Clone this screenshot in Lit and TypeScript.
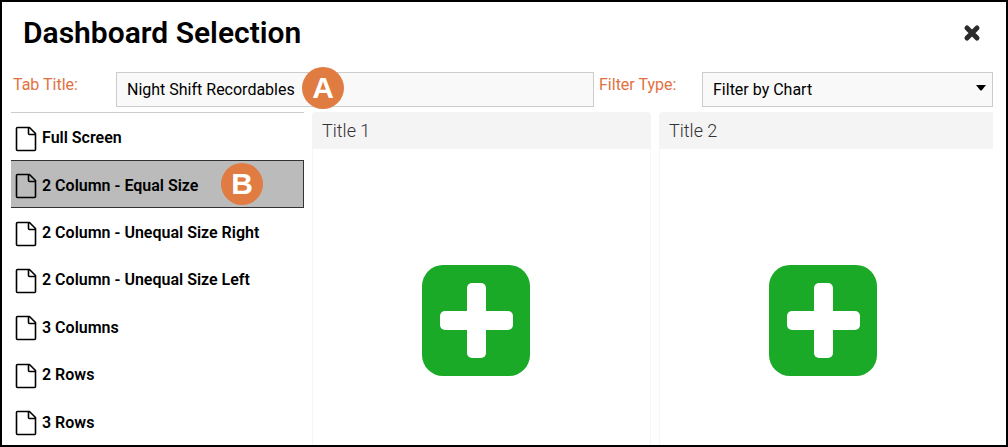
import { LitElement, html, css } from "lit";
import { customElement, property, state } from "lit/decorators.js";
import { classMap } from "lit/directives/class-map.js";

const LAYOUTS = [
  "Full Screen",
  "2 Column - Equal Size",
  "2 Column - Unequal Size Right",
  "2 Column - Unequal Size Left",
  "3 Columns",
  "2 Rows",
  "3 Rows",
];

@customElement("step-badge")
class StepBadge extends LitElement {
  @property() letter = "";

  static styles = css`
    :host {
      display: flex;
      align-items: center;
      justify-content: center;
      width: 42px;
      height: 42px;
      border-radius: 50%;
      background: #e07b41;
      color: #fff;
      font: bold 30px/42px "Liberation Sans", Arial, sans-serif;
      pointer-events: none;
    }
  `;

  render() {
    return html`${this.letter}`;
  }
}

@customElement("chart-panel")
class ChartPanel extends LitElement {
  @property() heading = "";

  static styles = css`
    :host {
      display: flex;
      flex-direction: column;
      min-width: 0;
      border-radius: 4px 4px 0 0;
    }
    .heading {
      margin: 0;
      padding: 0 10px;
      background: #f4f4f4;
      border-radius: 4px 4px 0 0;
      color: #333;
      font-size: 18px;
      font-weight: 300;
      line-height: 37px;
    }
    .body {
      flex: 1;
      display: flex;
      justify-content: center;
      align-items: flex-start;
      padding: 116px 11px 0 0;
      border: solid #f6f6f6;
      border-width: 0 1px;
    }
    :host([flush]) .heading {
      border-top-right-radius: 0;
    }
    :host([flush]) .body {
      border-right: 0;
      padding-right: 7px;
    }
    .add {
      padding: 0;
      border: 0;
      background: none;
      cursor: pointer;
    }
    .plus {
      display: block;
      width: 108px;
      height: 111px;
    }
  `;

  render() {
    return html`
      <h2 class="heading">${this.heading}</h2>
      <div class="body">
        <button class="add" type="button" aria-label="Add chart to ${this.heading}">
          <svg class="plus" viewBox="0 0 108 111" aria-hidden="true">
            <rect width="108" height="111" rx="21" fill="#1aaa28" />
            <rect x="45" y="18" width="19" height="75" rx="5" fill="#fff" />
            <rect x="18" y="46" width="73" height="19" rx="5" fill="#fff" />
          </svg>
        </button>
      </div>
    `;
  }
}

@customElement("app-root")
class AppRoot extends LitElement {
  @state() private selected = 1;

  static styles = css`
    :host {
      display: block;
      color: #000;
      font-family: Roboto, "Liberation Sans", sans-serif;
      font-size: 16px;
    }
    *,
    *::before {
      box-sizing: border-box;
    }
    .dialog {
      display: flex;
      flex-direction: column;
      min-height: 100vh;
      padding: 0 13px 0 9px;
      border: 2px solid #000;
      background: #fff;
    }
    .header {
      display: flex;
      align-items: center;
      justify-content: space-between;
      height: 62px;
      padding: 0 12px;
    }
    .title {
      margin: 0;
      font-size: 30px;
      font-weight: 600;
      line-height: 36px;
    }
    .close {
      padding: 0;
      border: 0;
      background: none;
      cursor: pointer;
    }
    .cross {
      display: block;
      width: 18px;
      height: 18px;
    }
    .filters {
      display: flex;
      padding: 8px 0 5px 2px;
    }
    .label {
      color: #e2703f;
      line-height: 25px;
    }
    .label-tab {
      width: 103px;
    }
    .label-filter {
      width: 103px;
      margin-left: 5px;
    }
    .field {
      position: relative;
      flex: 478;
    }
    .field-filter {
      flex: 291;
    }
    .control {
      display: block;
      width: 100%;
      height: 35px;
      margin: 0;
      padding: 0 10px;
      border: 1px solid #ccc;
      border-radius: 0;
      background: #f9f9f9;
      color: #000;
      font: inherit;
      appearance: none;
    }
    .arrow {
      position: absolute;
      top: 13px;
      right: 7px;
      width: 10px;
      height: 6px;
      pointer-events: none;
    }
    .badge-a {
      position: absolute;
      top: -5px;
      left: 186px;
    }
    .content {
      flex: 1;
      display: grid;
      grid-template-columns: 293fr 339fr 334fr;
      gap: 8px;
    }
    .layouts {
      display: grid;
      grid-auto-rows: 1fr;
      margin: 0;
      padding: 0;
      border-top: 1px solid #ccc;
      list-style: none;
    }
    .item {
      position: relative;
      display: flex;
    }
    .layout {
      flex: 1;
      display: flex;
      align-items: center;
      gap: 5px;
      padding: 2px 4px 0;
      border: solid transparent;
      border-width: 1px 1px 1px 0;
      background: none;
      color: #000;
      font: inherit;
      font-weight: 600;
      text-align: left;
      cursor: pointer;
    }
    .layout.selected {
      border-color: #333;
      background: #bbb;
    }
    .page {
      flex: none;
      width: 22px;
      height: 26px;
      margin-top: 2px;
    }
    .badge-b {
      position: absolute;
      top: 3px;
      left: 210px;
    }
  `;

  render() {
    return html`
      <main class="dialog">
        <header class="header">
          <h1 class="title">Dashboard Selection</h1>
          <button class="close" type="button" aria-label="Close">
            <svg class="cross" viewBox="0 0 18 18" aria-hidden="true">
              <path d="M4 4L14 14M14 4L4 14" stroke="#2b2b2b" stroke-width="5" stroke-linecap="round" />
            </svg>
          </button>
        </header>

        <form class="filters">
          <label class="label label-tab" for="tab-title">Tab Title:</label>
          <div class="field">
            <input class="control" id="tab-title" type="text" value="Night Shift Recordables" />
            <step-badge class="badge-a" letter="A"></step-badge>
          </div>
          <label class="label label-filter" for="filter-type">Filter Type:</label>
          <div class="field field-filter">
            <select class="control" id="filter-type">
              <option>Filter by Chart</option>
            </select>
            <svg class="arrow" viewBox="0 0 10 6" aria-hidden="true">
              <path d="M0 0H10L6 5Q5 6 4 5Z" />
            </svg>
          </div>
        </form>

        <div class="content">
          <ul class="layouts">
            ${LAYOUTS.map(
              (name, i) => html`
                <li class="item">
                  <button
                    class=${classMap({ layout: true, selected: i === this.selected })}
                    type="button"
                    aria-pressed=${i === this.selected}
                    @click=${() => (this.selected = i)}
                  >
                    <svg class="page" viewBox="0 0 22 26" aria-hidden="true">
                      <path
                        d="M2.5 1.5H14.5L20.5 7.5V23.5Q20.5 24.5 19.5 24.5H2.5Q1.5 24.5 1.5 23.5V2.5Q1.5 1.5 2.5 1.5ZM13.5 1.5V7.5Q13.5 8.5 14.5 8.5H20.5"
                        fill="none"
                        stroke="#000"
                        stroke-width="1.6"
                        stroke-linejoin="round"
                      />
                    </svg>
                    ${name}
                  </button>
                  ${i === 1 ? html`<step-badge class="badge-b" letter="B"></step-badge>` : ""}
                </li>
              `
            )}
          </ul>
          <chart-panel heading="Title 1"></chart-panel>
          <chart-panel heading="Title 2" flush></chart-panel>
        </div>
      </main>
    `;
  }
}
